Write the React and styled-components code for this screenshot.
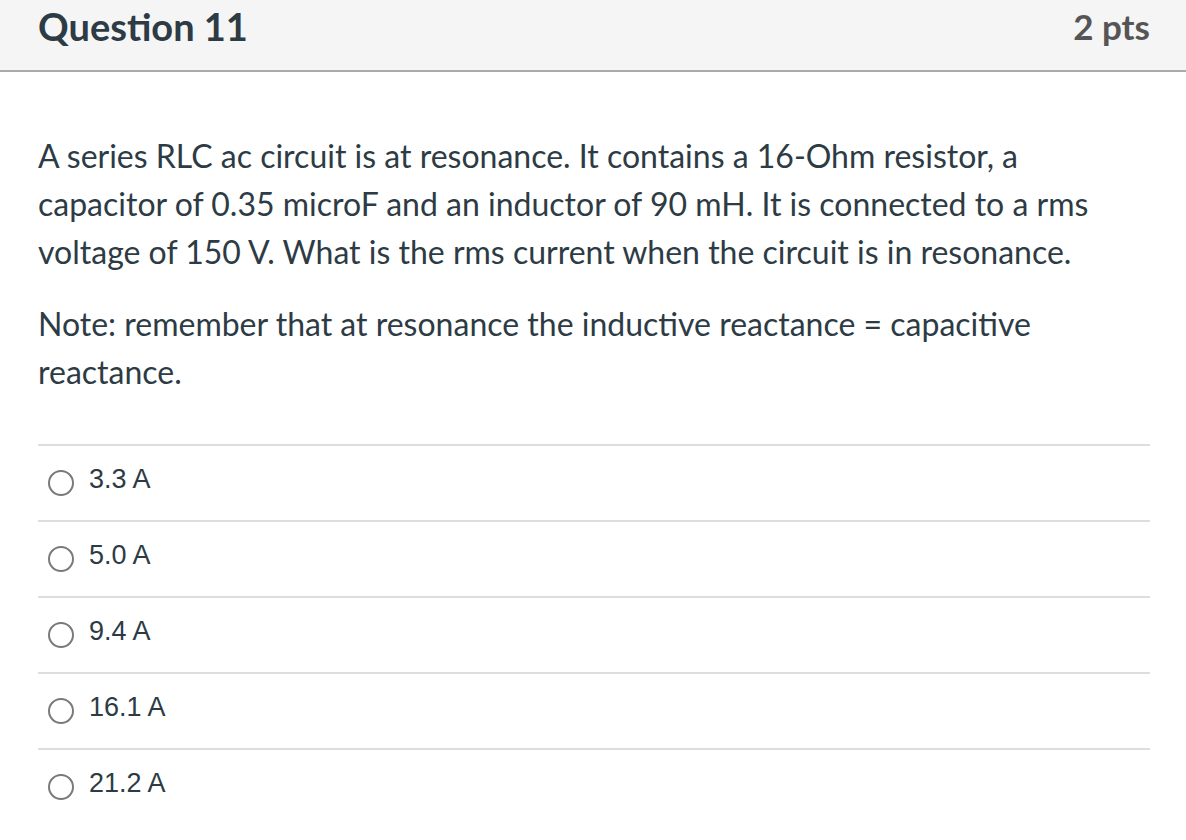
import React from 'react';
import styled, { createGlobalStyle } from 'styled-components';

const GlobalStyle = createGlobalStyle`
  body {
    margin: 0;
    background: #ffffff;
    font-family: Lato, "Helvetica Neue", Arial, sans-serif;
    color: #2d3b45;
  }
`;

const Header = styled.div`
  display: flex;
  justify-content: space-between;
  align-items: center;
  height: 72px;
  box-sizing: border-box;
  padding: 0 36px 18px 38px;
  background: #f5f5f5;
  border-bottom: 2px solid #aaaaaa;
`;

const Title = styled.h2`
  margin: 0;
  font-family: Lato, sans-serif;
  font-weight: 700;
  font-size: 38px;
  color: #2d3b45;
`;

const Points = styled.div`
  font-family: Lato, sans-serif;
  font-weight: 700;
  font-size: 35px;
  color: #555555;
`;

const Body = styled.div`
  padding: 60px 36px 0 38px;
`;

const Paragraph = styled.p`
  max-width: 1080px;
  margin: 0 0 24px;
  font-family: Lato, sans-serif;
  font-size: 32px;
  line-height: 48px;
  color: #2d3b45;
`;

const Answers = styled.div`
  margin-top: 48px;
`;

const Answer = styled.label`
  display: flex;
  align-items: center;
  gap: 15px;
  height: 76px;
  padding-left: 10px;
  border-top: 2px solid #dddddd;
  box-sizing: border-box;
  font-family: "Liberation Sans", Arial, sans-serif;
  font-size: 27px;
  color: #2d3b45;
`;

const AnswerText = styled.span`
  margin-bottom: 8px;
`;

const Radio = styled.span`
  width: 26px;
  height: 26px;
  box-sizing: border-box;
  border: 2px solid #7a7a7a;
  border-radius: 50%;
  flex: none;
`;

const options = ['3.3 A', '5.0 A', '9.4 A', '16.1 A', '21.2 A'];

export default function App() {
  return (
    <>
      <GlobalStyle />
      <Header>
        <Title>Question 11</Title>
        <Points>2 pts</Points>
      </Header>
      <Body>
        <Paragraph>
          A series RLC ac circuit is at resonance. It contains a 16-Ohm resistor, a
          capacitor of 0.35 microF and an inductor of 90 mH. It is connected to a rms
          voltage of 150 V. What is the rms current when the circuit is in resonance.
        </Paragraph>
        <Paragraph>
          Note: remember that at resonance the inductive reactance = capacitive
          reactance.
        </Paragraph>
        <Answers>
          {options.map((o) => (
            <Answer key={o}>
              <Radio />
              <AnswerText>{o}</AnswerText>
            </Answer>
          ))}
        </Answers>
      </Body>
    </>
  );
}
